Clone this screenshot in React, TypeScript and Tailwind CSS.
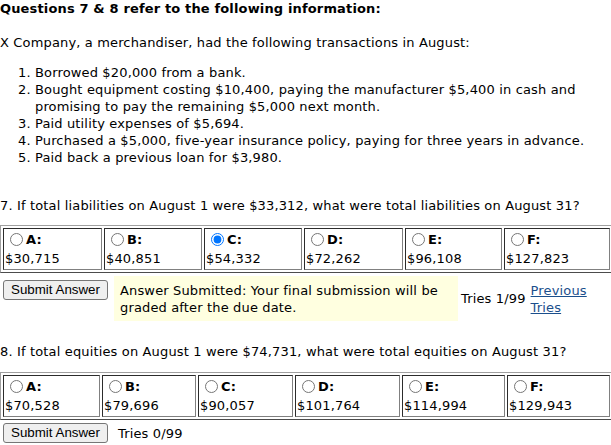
import React from 'react';

type Choice = { key: string; value: string; width: string };

const q7Choices: Choice[] = [
  { key: 'A', value: '$30,715', width: 'w-[99px]' },
  { key: 'B', value: '$40,851', width: 'w-[98px]' },
  { key: 'C', value: '$54,332', width: 'w-[98px]' },
  { key: 'D', value: '$72,262', width: 'w-[99px]' },
  { key: 'E', value: '$96,108', width: 'w-[97px]' },
  { key: 'F', value: '$127,823', width: 'w-[106px]' },
];

const q8Choices: Choice[] = [
  { key: 'A', value: '$70,528', width: 'w-[97px]' },
  { key: 'B', value: '$79,696', width: 'w-[94px]' },
  { key: 'C', value: '$90,057', width: 'w-[95px]' },
  { key: 'D', value: '$101,764', width: 'w-[105px]' },
  { key: 'E', value: '$114,994', width: 'w-[103px]' },
  { key: 'F', value: '$129,943', width: 'w-[103px]' },
];

function ChoiceTable({ name, choices, selected }: { name: string; choices: Choice[]; selected?: string }) {
  return (
    <table className="table-fixed w-[613px] border-separate border-spacing-[2px] border border-[#a0a0a0] [border-style:outset]">
      <tbody>
        <tr>
          {choices.map((c) => (
            <td
              key={c.key}
              className={`${c.width} h-[42px] p-[1px] align-top border border-[#808080] [border-style:inset]`}
            >
              <label className="flex h-[19px] items-center">
                <input
                  type="radio"
                  name={name}
                  defaultChecked={selected === c.key}
                  className="m-0 ml-[5px] mr-[3px] h-[13px] w-[13px]"
                />
                <b>{c.key}:</b>
              </label>
              <div className="flex h-[19px] items-center">{c.value}</div>
            </td>
          ))}
        </tr>
      </tbody>
    </table>
  );
}

function SubmitButton() {
  return (
    <button className="ml-[3px] h-[20px] w-[105px] shrink-0 rounded-[3px] border border-[#767676] bg-[#efefef] px-[6px] font-['Liberation_Sans',Arial,sans-serif] text-[13.33px] leading-none tracking-normal text-black">
      Submit Answer
    </button>
  );
}

export default function App() {
  return (
    <div className="w-[611px] h-[445px] overflow-hidden bg-white font-['DejaVu_Sans',Verdana,sans-serif] text-[13px] leading-[17px] tracking-[0.15px] text-black">
      <h3 className="font-bold">Questions 7 &amp; 8 refer to the following information:</h3>
      <p className="mt-[17px]">X Company, a merchandiser, had the following transactions in August:</p>
      <ol className="mt-[13px] list-decimal pl-[35px]">
        <li>Borrowed $20,000 from a bank.</li>
        <li>
          Bought equipment costing $10,400, paying the manufacturer $5,400 in cash and promising to pay the
          remaining $5,000 next month.
        </li>
        <li>Paid utility expenses of $5,694.</li>
        <li>Purchased a $5,000, five-year insurance policy, paying for three years in advance.</li>
        <li>Paid back a previous loan for $3,980.</li>
      </ol>

      <p className="mt-[31px]">
        7. If total liabilities on August 1 were $33,312, what were total liabilities on August 31?
      </p>
      <div className="mt-[11px]">
        <ChoiceTable name="q7" choices={q7Choices} selected="C" />
      </div>
      <div className="mt-[3px] flex items-start">
        <div className="pt-[4px]">
          <SubmitButton />
        </div>
        <div className="ml-[6px] w-[344px] bg-[#ffffe0] px-[6px] pt-[6px] pb-[5px]">
          Answer Submitted: Your final submission will be graded after the due date.
        </div>
        <div className="ml-[3px] flex h-[45px] items-center">
          <span>Tries 1/99</span>
          <a href="#" className="ml-[5px] w-[60px] text-[#1b4f8c] underline">
            Previous Tries
          </a>
        </div>
      </div>

      <p className="mt-[22px]">
        8. If total equities on August 1 were $74,731, what were total equities on August 31?
      </p>
      <div className="mt-[12px]">
        <ChoiceTable name="q8" choices={q8Choices} />
      </div>
      <div className="mt-[3px] flex items-center">
        <SubmitButton />
        <span className="ml-[10px]">Tries 0/99</span>
      </div>
    </div>
  );
}
